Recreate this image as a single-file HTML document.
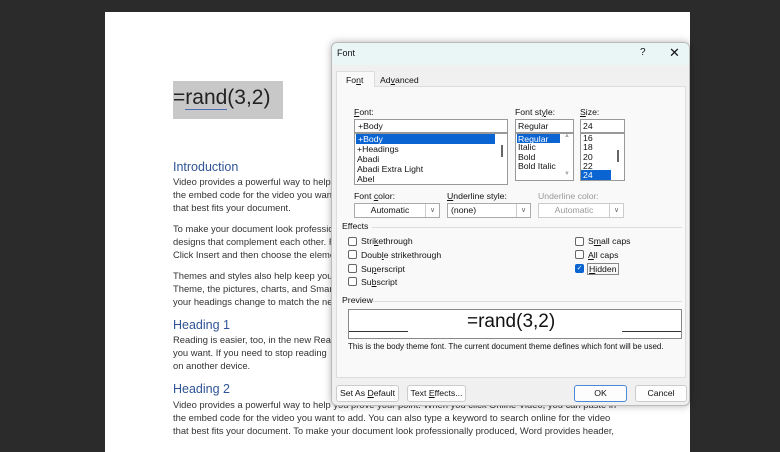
<!DOCTYPE html>
<html><head><style>
*{margin:0;padding:0;box-sizing:border-box}
body{width:780px;height:438px;background:#2b2b2b;position:relative;overflow:hidden;font-family:"Liberation Sans",sans-serif}
.page{position:absolute;left:105px;top:12px;width:585px;height:440px;background:#fff}
.t{position:absolute;left:173px;font-size:9.4px;color:#333;white-space:nowrap}
.h{position:absolute;left:173px;font-size:12.5px;color:#2f5496;white-space:nowrap}
.dlg{position:absolute;left:331px;top:42px;width:359px;height:364px;background:#f0f0f0;border:1px solid #bbb;border-radius:6px;box-shadow:0 0 8px rgba(0,0,0,.3);font-size:8.7px;color:#111;overflow:hidden}
.a{position:absolute;white-space:nowrap}
.box{position:absolute;background:#fff;border:1px solid #999}
.sel{background:#0a64d2;color:#fff}
.cb{position:absolute;width:9px;height:9px;border:1px solid #666;border-radius:2px;background:#fff}
.btn{position:absolute;height:17px;background:#fdfdfd;border:1px solid #ccc;border-radius:3px;text-align:center;line-height:15px}
.dd{position:absolute;height:15px;background:#fff;border:1px solid #aaa;line-height:13px}
.dd span{position:absolute;right:0;top:0;width:14px;height:13px;border-left:1px solid #ccc;text-align:center;font-size:7px;color:#666}
</style></head><body>
<div class="page"></div>
<div style="position:absolute;left:173px;top:81px;width:110px;height:38px;background:#c8c8c8"></div>
<div class="a" style="left:173px;top:86px;font-size:21px;color:#222">=<span style="border-bottom:1.5px solid #4a6fb5">rand</span>(3,2)</div>
<div class="h" style="top:160px">Introduction</div>
<div class="t" style="top:176px">Video provides a powerful way to help</div>
<div class="t" style="top:189px">the embed code for the video you want</div>
<div class="t" style="top:202px">that best fits your document.</div>
<div class="t" style="top:223px">To make your document look professio</div>
<div class="t" style="top:236px">designs that complement each other. F</div>
<div class="t" style="top:249px">Click Insert and then choose the eleme</div>
<div class="t" style="top:270px">Themes and styles also help keep your</div>
<div class="t" style="top:283px">Theme, the pictures, charts, and Smart</div>
<div class="t" style="top:296px">your headings change to match the ne</div>
<div class="h" style="top:318px">Heading 1</div>
<div class="t" style="top:334px">Reading is easier, too, in the new Read</div>
<div class="t" style="top:347px">you want. If you need to stop reading</div>
<div class="t" style="top:360px">on another device.</div>
<div class="h" style="top:382px">Heading 2</div>
<div class="t" style="top:399px">Video provides a powerful way to help you prove your point. When you click Online Video, you can paste in</div>
<div class="t" style="top:412px">the embed code for the video you want to add. You can also type a keyword to search online for the video</div>
<div class="t" style="top:425px">that best fits your document. To make your document look professionally produced, Word provides header,</div>
<div class="dlg">
<div style="position:absolute;left:0;top:0;width:359px;height:22px;background:#eaf6f6"></div>
<div class="a" style="left:5px;top:5px;font-size:9px">Font</div>
<div class="a" style="left:308px;top:4px;font-size:10px">?</div>
<div class="a" style="left:337px;top:2px;font-size:13px">✕</div>
<div style="position:absolute;left:4px;top:43px;width:350px;height:292px;background:#f9f9f9;border:1px solid #ddd"></div>
<div style="position:absolute;left:4px;top:28px;width:39px;height:16px;background:#f9f9f9;border:1px solid #ddd;border-bottom:none"></div>
<div class="a" style="left:14px;top:32px">Fo<u>n</u>t</div>
<div class="a" style="left:48px;top:32px">Ad<u>v</u>anced</div>
<div class="a" style="left:22px;top:64px"><u>F</u>ont:</div>
<div class="a" style="left:183px;top:64px">Font st<u>y</u>le:</div>
<div class="a" style="left:248px;top:64px"><u>S</u>ize:</div>
<div class="box" style="left:22px;top:76px;width:154px;height:14px;padding:1px 3px">+Body</div>
<div class="box" style="left:22px;top:90px;width:154px;height:52px"></div>
<div class="a sel" style="left:24px;top:91px;width:139px;height:10px;padding-left:2px">+Body</div>
<div class="a" style="left:25px;top:101px;line-height:10px">+Headings<br>Abadi<br>Abadi Extra Light<br>Abel</div>
<div style="position:absolute;left:169px;top:102px;width:2px;height:12px;background:#666"></div>
<div class="box" style="left:183px;top:76px;width:59px;height:14px;padding:1px 2px">Regular</div>
<div class="box" style="left:183px;top:90px;width:59px;height:48px"></div>
<div class="a sel" style="left:185px;top:91px;width:43px;height:9px;padding-left:1px">Regular</div>
<div class="a" style="left:186px;top:100px;line-height:9.5px">Italic<br>Bold<br>Bold Italic</div>
<div class="a" style="left:232px;top:90px;font-size:6px;color:#aaa">▲</div>
<div class="a" style="left:232px;top:128px;font-size:6px;color:#aaa">▼</div>
<div class="box" style="left:248px;top:76px;width:45px;height:14px;padding:1px 2px">24</div>
<div class="box" style="left:248px;top:90px;width:45px;height:48px"></div>
<div class="a" style="left:251px;top:91px;line-height:9.3px">16<br>18<br>20<br>22</div>
<div class="a sel" style="left:249px;top:127px;width:30px;height:10px;padding-left:2px">24</div>
<div style="position:absolute;left:285px;top:107px;width:2px;height:12px;background:#666"></div>
<div class="a" style="left:22px;top:148px">Font <u>c</u>olor:</div>
<div class="a" style="left:115px;top:148px"><u>U</u>nderline style:</div>
<div class="a" style="left:206px;top:148px;color:#999">Underline color:</div>
<div class="dd" style="left:22px;top:160px;width:86px"><div style="text-align:center;width:70px">Automatic</div><span>∨</span></div>
<div class="dd" style="left:115px;top:160px;width:84px;padding-left:3px">(none)<span>∨</span></div>
<div class="dd" style="left:206px;top:160px;width:86px;color:#999;border-color:#ccc"><div style="text-align:center;width:70px">Automatic</div><span>∨</span></div>
<div class="a" style="left:10px;top:178px">Effects</div>
<div style="position:absolute;left:40px;top:184px;width:310px;border-top:1px solid #ddd"></div>
<div class="cb" style="left:16px;top:194px"></div><div class="a" style="left:29px;top:193px">Stri<u>k</u>ethrough</div>
<div class="cb" style="left:16px;top:207px"></div><div class="a" style="left:29px;top:207px">Doub<u>l</u>e strikethrough</div>
<div class="cb" style="left:16px;top:221px"></div><div class="a" style="left:29px;top:221px">Su<u>p</u>erscript</div>
<div class="cb" style="left:16px;top:234px"></div><div class="a" style="left:29px;top:234px">Su<u>b</u>script</div>
<div class="cb" style="left:243px;top:194px"></div><div class="a" style="left:256px;top:193px">S<u>m</u>all caps</div>
<div class="cb" style="left:243px;top:207px"></div><div class="a" style="left:256px;top:207px"><u>A</u>ll caps</div>
<div class="cb" style="left:243px;top:221px;background:#0a64d2;border-color:#0a64d2;color:#fff;font-size:7px;line-height:7px;text-align:center">✓</div><div class="a" style="left:255px;top:220px;border:1px solid #888;padding:0 1px"><u>H</u>idden</div>
<div class="a" style="left:10px;top:252px">Preview</div>
<div style="position:absolute;left:40px;top:258px;width:310px;border-top:1px solid #ddd"></div>
<div style="position:absolute;left:16px;top:266px;width:334px;height:30px;background:#fff;border:1px solid #888"></div>
<div style="position:absolute;left:17px;top:288px;width:59px;border-top:1px solid #333"></div>
<div style="position:absolute;left:290px;top:288px;width:59px;border-top:1px solid #333"></div>
<div class="a" style="left:135px;top:268px;font-size:19px;color:#111">=rand(3,2)</div>
<div class="a" style="left:16px;top:299px;font-size:8px">This is the body theme font. The current document theme defines which font will be used.</div>
<div class="btn" style="left:4px;top:342px;width:63px">Set As <u>D</u>efault</div>
<div class="btn" style="left:75px;top:342px;width:59px">Text <u>E</u>ffects...</div>
<div class="btn" style="left:242px;top:342px;width:53px;border-color:#4a88d8">OK</div>
<div class="btn" style="left:303px;top:342px;width:52px">Cancel</div>
</div>
</body></html>
